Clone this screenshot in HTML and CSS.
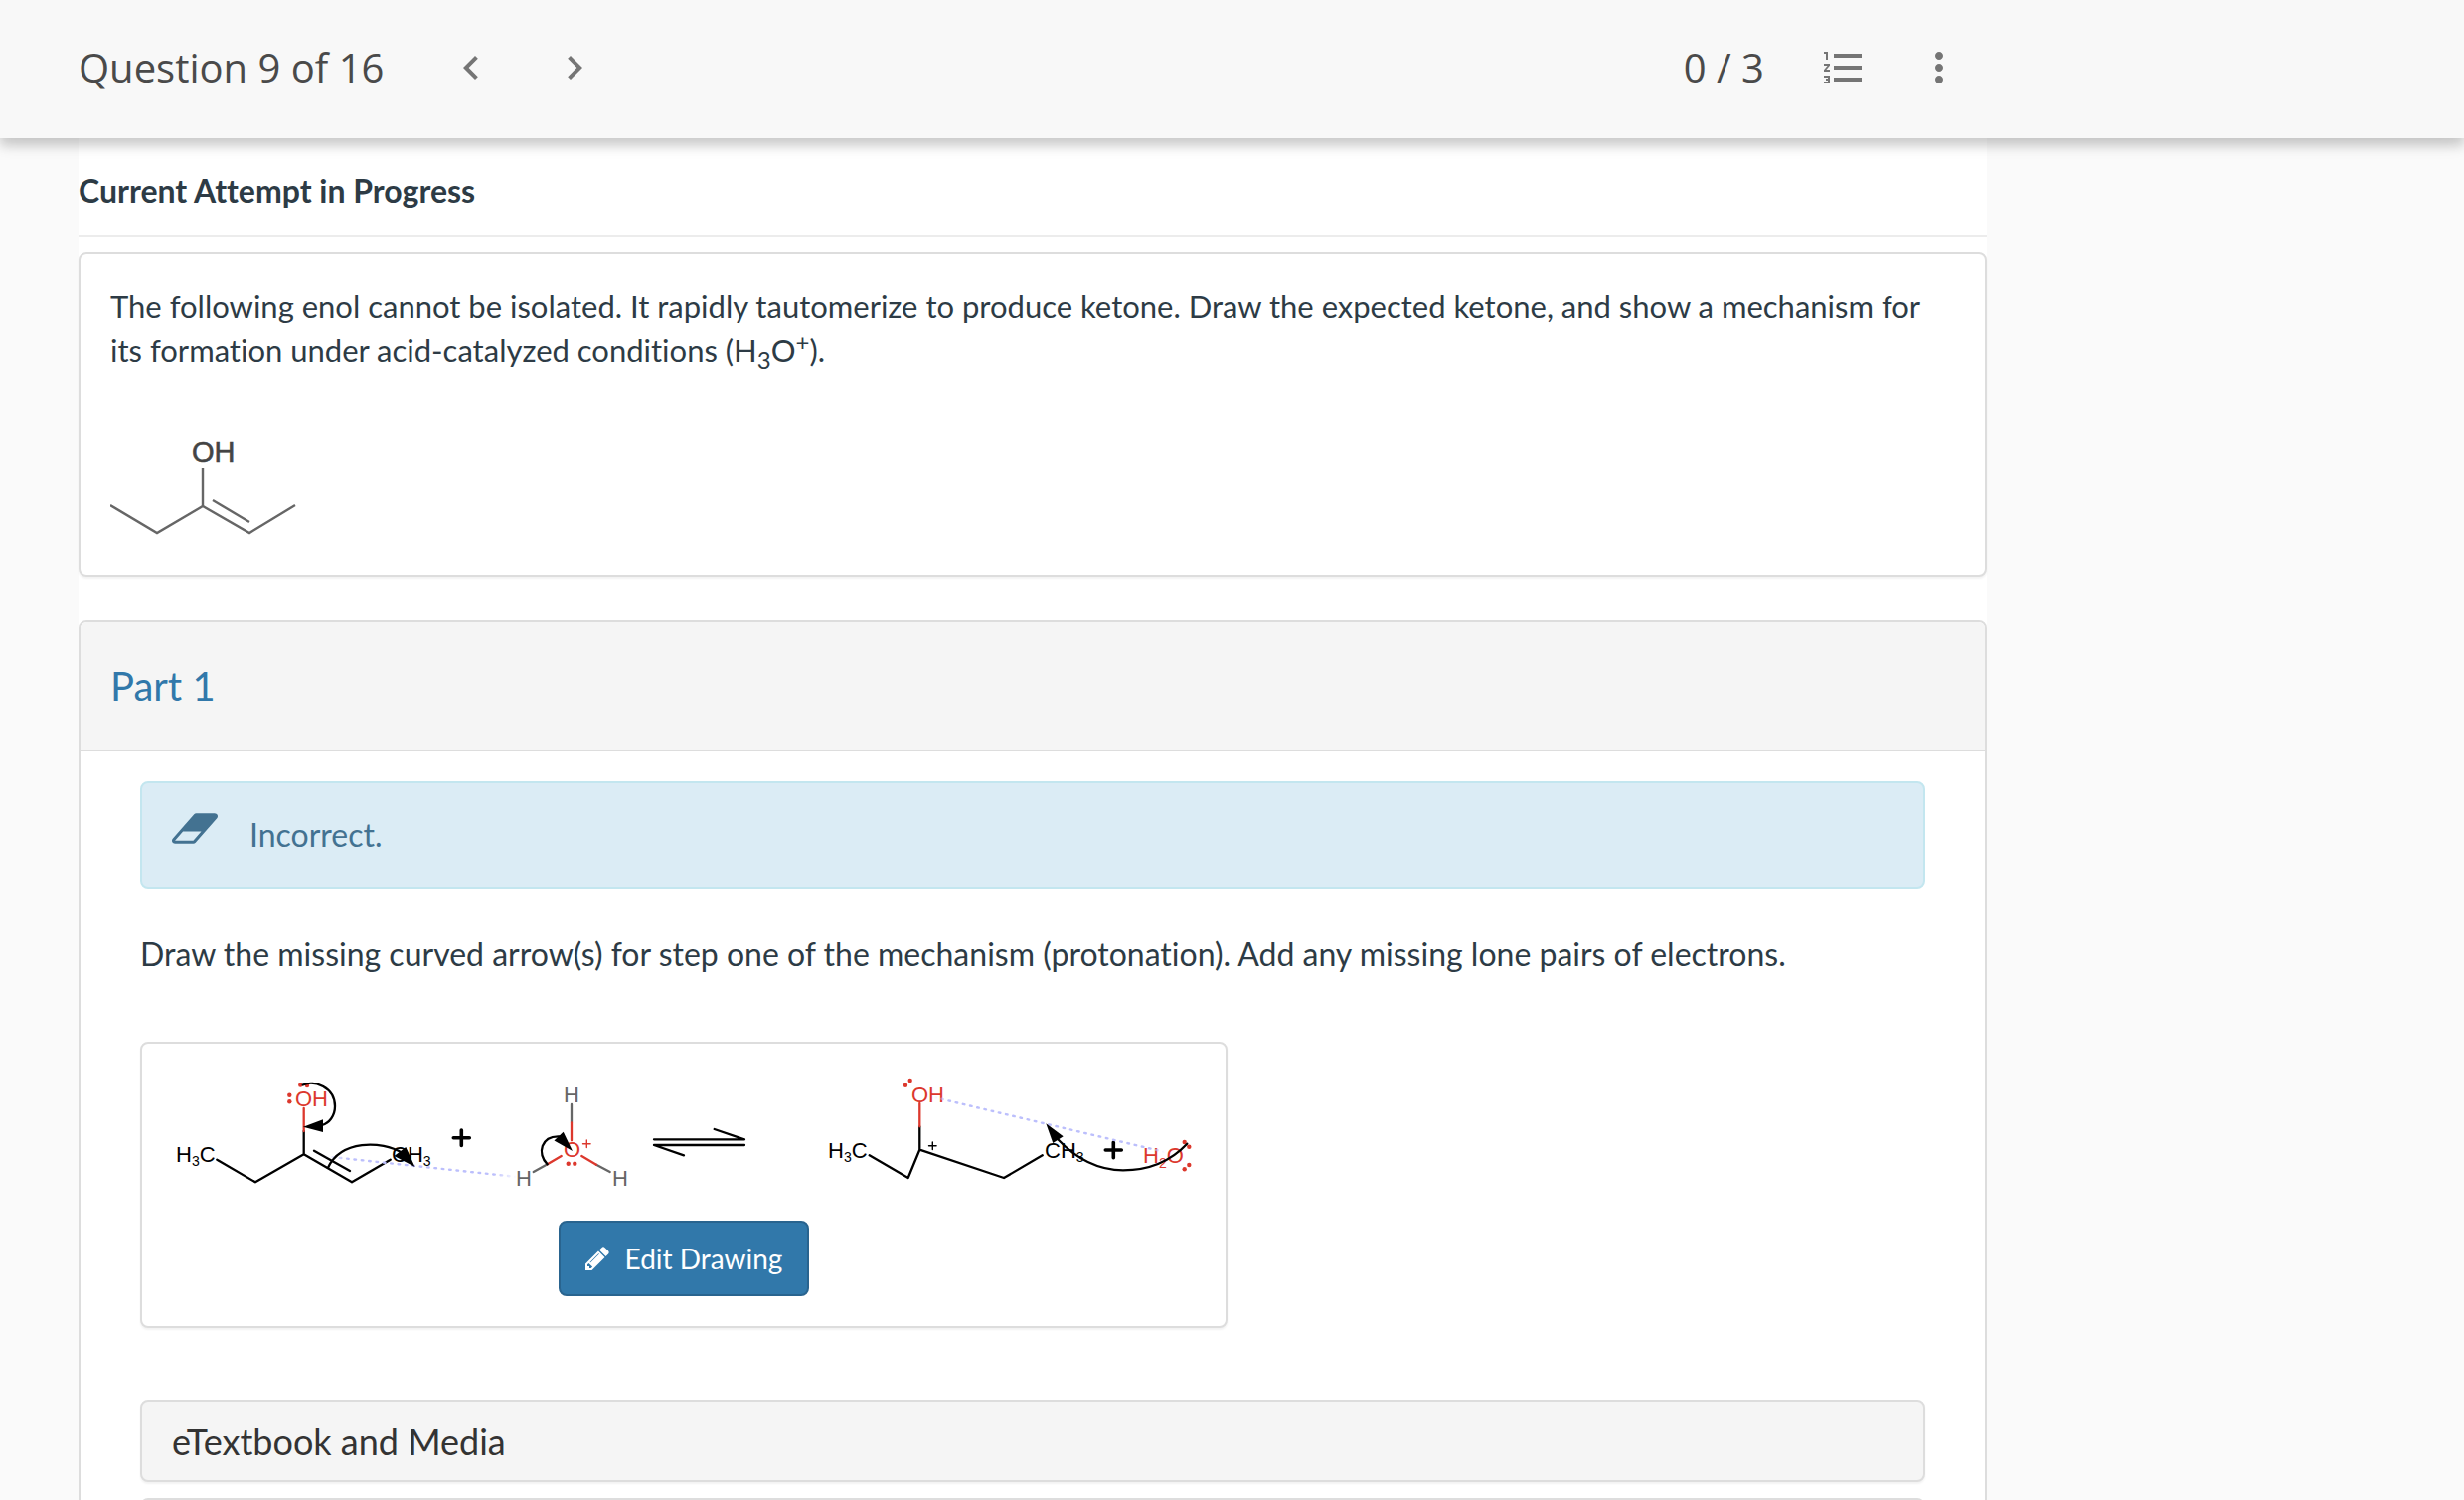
FILE: index.html
```html
<!DOCTYPE html>
<html lang="en">
<head>
    <meta charset="UTF-8">
    <meta name="viewport" content="width=device-width, initial-scale=1.0">
    <title>Question 9 of 16</title>
    <link rel="stylesheet" href="styles.css">
</head>
<body>
    <header class="topbar">
        <div class="topbar-inner">
            <h1>Question 9 of 16</h1>
            <nav class="pager">
                <button type="button" class="icon-button" aria-label="Previous question">
                    <svg viewBox="0 0 24 24"><path d="M15.41 7.41L14 6l-6 6 6 6 1.41-1.41L10.83 12z"/></svg>
                </button>
                <button type="button" class="icon-button" aria-label="Next question">
                    <svg viewBox="0 0 24 24"><path d="M10 6L8.59 7.41 13.17 12l-4.58 4.59L10 18l6-6z"/></svg>
                </button>
            </nav>
            <span class="score">0 / 3</span>
            <button type="button" class="icon-button" aria-label="Question list">
                <svg viewBox="0 0 24 24"><path d="M2 17h2v.5H3v1h1v.5H2v1h3v-4H2v1zm1-9h1V4H2v1h1v3zm-1 3h1.8L2 13.1v.9h3v-1H3.2L5 10.9V10H2v1zm5-6v2h14V5H7zm0 14h14v-2H7v2zm0-6h14v-2H7v2z"/></svg>
            </button>
            <button type="button" class="icon-button" aria-label="More options">
                <svg viewBox="0 0 24 24"><path d="M12 8c1.1 0 2-.9 2-2s-.9-2-2-2-2 .9-2 2 .9 2 2 2zm0 2c-1.1 0-2 .9-2 2s.9 2 2 2 2-.9 2-2-.9-2-2-2zm0 6c-1.1 0-2 .9-2 2s.9 2 2 2 2-.9 2-2-.9-2-2-2z"/></svg>
            </button>
        </div>
    </header>

    <main class="content">
        <h2 class="attempt">Current Attempt in Progress</h2>

        <section class="card question">
            <p>The following enol cannot be isolated. It rapidly tautomerize to produce ketone. Draw the expected ketone, and show a mechanism for its formation under acid-catalyzed conditions (H<sub>3</sub>O<sup>+</sup>).</p>
            <svg class="enol" viewBox="0 0 190 118" width="190" height="118" role="img" aria-label="Enol structure">
                <text x="82" y="35">OH</text>
                <path d="M93 41V79M0 78L47 106L93 79L140 106L186 78M103 73L140 95"/>
            </svg>
        </section>

        <section class="panel">
            <h2 class="panel-header"><a href="#part-1">Part 1</a></h2>
            <div class="panel-body" id="part-1">
                <div class="alert">
                    <svg viewBox="0 256 1920 1280" width="46" height="31"><path d="M896 1408l336-384h-768l-336 384h768zM1909 331q15 34 9.5 71.5t-30.5 65.5l-896 1024q-38 44-96 44h-768q-38 0-69.5-20.5t-47.5-54.5q-15-34-9.5-71.5t30.5-65.5l896-1024q38-44 96-44h768q38 0 69.5 20.5t47.5 54.5z"/></svg>
                    <span>Incorrect.</span>
                </div>

                <p>Draw the missing curved arrow(s) for step one of the mechanism (protonation). Add any missing lone pairs of electrons.</p>

                <div class="card drawing">
                    <svg class="mechanism" viewBox="0 0 1090 160" width="1090" height="160" role="img" aria-label="Protonation mechanism">
                        <defs>
                            <linearGradient id="fade-left" gradientUnits="userSpaceOnUse" x1="184" y1="0" x2="377" y2="0">
                                <stop offset="0" stop-color="#bcbffc" stop-opacity="0"/>
                                <stop offset="0.12" stop-color="#bcbffc"/>
                                <stop offset="0.88" stop-color="#bcbffc"/>
                                <stop offset="1" stop-color="#bcbffc" stop-opacity="0"/>
                            </linearGradient>
                            <linearGradient id="fade-right" gradientUnits="userSpaceOnUse" x1="797" y1="0" x2="1029" y2="0">
                                <stop offset="0" stop-color="#bcbffc" stop-opacity="0"/>
                                <stop offset="0.06" stop-color="#bcbffc"/>
                                <stop offset="0.94" stop-color="#bcbffc"/>
                                <stop offset="1" stop-color="#bcbffc" stop-opacity="0"/>
                            </linearGradient>
                        </defs>

                        <!-- enol -->
                        <text x="34" y="119">H<tspan class="small" dy="4">3</tspan><tspan dy="-4">C</tspan></text>
                        <text x="251" y="119">CH<tspan class="small" dy="4">3</tspan></text>
                        <text class="red" x="154" y="63">OH</text>
                        <path class="bond" d="M75.3 116.7L114 139.3L162.7 111.3L211 139.3L249.7 116.7M173 107.7L209 128M162.7 111.3V88"/>
                        <path class="bond red-line" d="M162.7 88V65"/>
                        <g class="red">
                            <circle cx="148.3" cy="51.7" r="2.2"/>
                            <circle cx="148.3" cy="58.3" r="2.2"/>
                            <circle cx="159.3" cy="41.5" r="2.2"/>
                            <circle cx="166" cy="42" r="2.2"/>
                        </g>
                        <path class="dotted" stroke="url(#fade-left)" d="M184 113.3L377 134"/>
                        <path class="bond" d="M161.7 41.5C173 36 194 44 194 63C194 73 188 80 181 82"/>
                        <path d="M162 83.7L182 76.3V89z"/>
                        <path class="bond" d="M187 124.7C200 97 240 97 262 110"/>
                        <path d="M274.5 124L265.3 104L253.5 113z"/>

                        <path class="plus" d="M313.3 94.7H329.3M321.3 87V102.4"/>

                        <!-- hydronium -->
                        <g class="grey">
                            <text x="424" y="59">H</text>
                            <text x="376" y="143">H</text>
                            <text x="473" y="143">H</text>
                        </g>
                        <text class="red" x="424" y="114">O</text>
                        <path class="bond grey-line" d="M432 61V79.3M407.7 121.3L393.7 129M457 121.7L470.7 129"/>
                        <path class="bond red-line" d="M432 79.3V97.3M421.7 113L407.7 121.3M442.3 113L457 121.7"/>
                        <path class="charge red-line" d="M443.5 100.7H451.1M447.3 96.9V104.5"/>
                        <g class="red">
                            <circle cx="428.7" cy="120.7" r="2.2"/>
                            <circle cx="435.3" cy="120.7" r="2.2"/>
                        </g>
                        <path class="bond" d="M407.7 121.3C397 111 401 92 421 93.5"/>
                        <path d="M433 108L423.7 88.7L414.5 97.5z"/>

                        <path class="bond" d="M575.7 86L606 96.3H515M606 102H515L545 112.3"/>

                        <!-- oxonium product -->
                        <text x="690" y="115">H<tspan class="small" dy="4">3</tspan><tspan dy="-4">C</tspan></text>
                        <text x="908" y="115">CH<tspan class="small" dy="4">3</tspan></text>
                        <text class="red" x="774" y="59">OH</text>
                        <path class="bond" d="M731.7 112.3L770.7 135L782.3 106.7L867 135L905.7 112.3M782.3 106.7V83.3"/>
                        <path class="bond red-line" d="M782.3 83.3V60"/>
                        <path class="charge" d="M791.5 102.7H799.1M795.3 98.9V106.5"/>
                        <g class="red">
                            <circle cx="768" cy="41.7" r="2.2"/>
                            <circle cx="772.7" cy="37" r="2.2"/>
                        </g>
                        <path class="plus" d="M969.3 107H985.3M977.3 99.3V114.7"/>

                        <!-- water -->
                        <text class="red" x="1007" y="120">H<tspan class="small" dy="5">2</tspan><tspan dy="-5">O</tspan></text>
                        <g class="red">
                            <circle cx="1048.7" cy="99" r="2.2"/>
                            <circle cx="1053.3" cy="103.7" r="2.2"/>
                            <circle cx="1053.3" cy="122" r="2.2"/>
                            <circle cx="1048.7" cy="126.3" r="2.2"/>
                        </g>
                        <path class="dotted" stroke="url(#fade-right)" d="M797 54L1029 109"/>
                        <path class="bond" d="M1051.3 100.7C1034 119 1012 127.3 987 127.3C962 127.3 940 116 921 96"/>
                        <path d="M909.3 80.3L926.7 93.3L916.3 100z"/>
                    </svg>
                    <button type="button" class="edit">
                        <svg viewBox="0 0 1536 1792" width="24" height="28"><path d="M363 1536l91-91-235-235-91 91v107h128v128h107zM886 608q0-22-22-22-10 0-17 7l-542 542q-7 7-7 17 0 22 22 22 10 0 17-7l542-542q7-7 7-17zM832 416l416 416-832 832h-416v-416zM1515 512q0 53-37 90l-166 166-416-416 166-165q36-38 90-38 53 0 91 38l235 234q37 39 37 91z"/></svg>
                        Edit Drawing
                    </button>
                </div>

                <div class="resources">
                    <button type="button" class="resource">eTextbook and Media</button>
                    <button type="button" class="resource" aria-label="More resources"></button>
                </div>
            </div>
        </section>
    </main>
</body>
</html>
```
FILE: styles.css
```css
* {
    box-sizing: border-box;
    margin: 0;
    padding: 0;
}

body {
    display: flex;
    flex-direction: column;
    height: 100vh;
    overflow: hidden;
    background-color: #fafafa;
    color: #2d3b45;
    font-family: Lato, "Open Sans", sans-serif;
    font-size: 32px;
    line-height: 44px;
    font-variant-ligatures: none;
}

button {
    font-family: inherit;
    font-variant-ligatures: inherit;
    cursor: pointer;
}

/* top bar */
.topbar {
    position: relative;
    z-index: 1;
    flex-shrink: 0;
    padding: 0 79px;
    background-color: #f8f8f8;
    color: #4a4a4a;
    font-family: "Open Sans", sans-serif;
    font-size: 40px;
    box-shadow: 0 8px 10px rgba(0, 0, 0, 0.14), 0 2px 20px rgba(0, 0, 0, 0.12);
}

.topbar-inner {
    display: flex;
    align-items: center;
    max-width: 1920px;
    padding: 20px 0 23px;
}

.topbar h1 {
    font-size: 40px;
    font-weight: 400;
}

.pager {
    display: flex;
    gap: 8px;
    margin-left: 40px;
    margin-right: auto;
}

.icon-button {
    display: flex;
    align-items: center;
    justify-content: center;
    width: 96px;
    height: 96px;
    border: none;
    background: none;
}

.icon-button svg {
    width: 48px;
    height: 48px;
    fill: #757575;
}

.score {
    margin-right: 32px;
}

/* page */
.content {
    flex: 1;
    max-width: 1920px;
    width: calc(100% - 158px);
    margin-left: 79px;
    background-color: #fff;
}

.attempt {
    padding: 31px 0 22px;
    border-bottom: 2px solid #ececec;
    font-size: 32px;
    font-weight: 700;
}

.card {
    border: 2px solid #ddd;
    border-radius: 8px;
    background-color: #fff;
    box-shadow: 0 2px 2px rgba(0, 0, 0, 0.05);
}

.question {
    margin: 16px 0 44px;
    padding: 30px;
    font-size: 31px;
}

.question sub,
.question sup {
    font-size: 24px;
    line-height: 0;
}

.enol {
    display: block;
    margin-top: 56px;
}

.enol text {
    fill: #444;
    stroke: #444;
    stroke-width: 0.6;
    font-family: "Liberation Sans", Arial, sans-serif;
    font-size: 29px;
}

.enol path {
    fill: none;
    stroke: #666;
    stroke-width: 2.4;
}

.panel {
    border: 2px solid #ddd;
    border-radius: 8px;
    background-color: #fff;
}

.panel-header {
    padding: 42px 30px;
    border-bottom: 2px solid #ddd;
    border-radius: 6px 6px 0 0;
    background-color: #f5f5f5;
    font-size: 40px;
    font-weight: 400;
}

.panel-header a {
    color: #3178aa;
    text-decoration: none;
}

.panel-body {
    padding: 30px 60px;
}

.alert {
    display: flex;
    align-items: flex-start;
    gap: 32px;
    margin-bottom: 44px;
    padding: 30px;
    border: 2px solid #c3e6ef;
    border-radius: 8px;
    background-color: #dbecf5;
    color: #437291;
}

.alert svg {
    fill: #437291;
}

/* mechanism drawing */
.drawing {
    max-width: 1094px;
    margin-top: 66px;
    padding-bottom: 30px;
}

.mechanism {
    display: block;
    max-width: 100%;
    height: auto;
}

.mechanism text {
    font-family: "Liberation Sans", Arial, sans-serif;
    font-size: 22px;
}

.mechanism .small {
    font-size: 14px;
}

.mechanism .red {
    fill: #dc382d;
}

.mechanism .grey {
    fill: #666;
}

.bond,
.plus,
.charge,
.dotted {
    fill: none;
    stroke-linecap: round;
    stroke-linejoin: round;
}

.bond {
    stroke: #000;
    stroke-width: 2.3;
}

.plus {
    stroke: #000;
    stroke-width: 3.6;
}

.charge {
    stroke: #000;
    stroke-width: 1.4;
}

.red-line {
    stroke: #dc382d;
}

.grey-line {
    stroke: #666;
}

.dotted {
    stroke-width: 2.4;
    stroke-dasharray: 1.6 5.8;
}

.edit {
    display: flex;
    align-items: center;
    gap: 16px;
    margin: 18px auto 0;
    padding: 14px 25px;
    border: 2px solid #29648f;
    border-radius: 8px;
    background-color: #3178aa;
    color: #fff;
    font-size: 28px;
    line-height: 44px;
}

.edit svg {
    fill: #fff;
}

.resources {
    display: flex;
    flex-direction: column;
    gap: 16px;
    margin-top: 72px;
}

.resource {
    min-height: 83px;
    padding: 14px 30px;
    border: 2px solid #ddd;
    border-radius: 8px;
    background-color: #f5f5f5;
    color: #333;
    font-size: 36px;
    text-align: left;
    box-shadow: 0 2px 2px rgba(0, 0, 0, 0.05);
}
```
